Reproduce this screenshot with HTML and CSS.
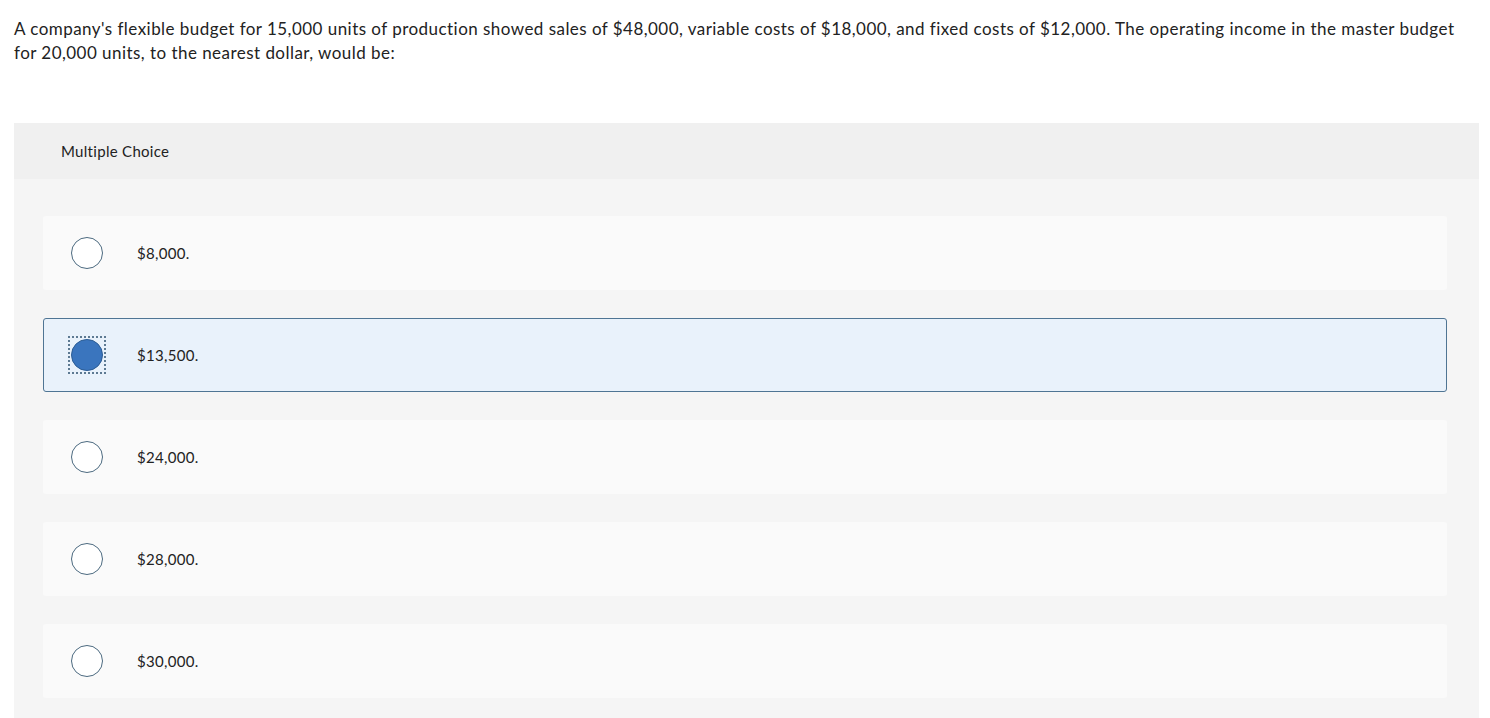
FILE: index.html
```html
<!DOCTYPE html>
<html lang="en">
<head>
<meta charset="utf-8">
<title>Multiple Choice</title>
<link rel="stylesheet" href="styles.css">
</head>
<body>
<div class="question">A company's flexible budget for 15,000 units of production showed sales of $48,000, variable costs of $18,000, and fixed costs of $12,000. The operating income in the master budget for 20,000 units, to the nearest dollar, would be:</div>
<div class="panel">
  <div class="panel-head">Multiple Choice</div>
  <div class="panel-body">
    <div class="option"><span class="radio-wrap"><span class="radio"></span></span><span class="label">$8,000.</span></div>
    <div class="option selected"><span class="radio-wrap focus"><span class="radio checked"></span></span><span class="label">$13,500.</span></div>
    <div class="option"><span class="radio-wrap"><span class="radio"></span></span><span class="label">$24,000.</span></div>
    <div class="option"><span class="radio-wrap"><span class="radio"></span></span><span class="label">$28,000.</span></div>
    <div class="option"><span class="radio-wrap"><span class="radio"></span></span><span class="label">$30,000.</span></div>
  </div>
</div>
</body>
</html>
```
FILE: styles.css
```css
html, body { margin: 0; padding: 0; background: #fff; }
body {
  font-family: "Lato", "Open Sans", "Liberation Sans", sans-serif;
  color: #222;
  padding: 17px 11px 0 14px;
}
.question {
  font-size: 17px;
  line-height: 24px;
  letter-spacing: 0.46px;
  color: #222;
}
.panel {
  margin-top: 58px;
  background: #f5f5f5;
}
.panel-head {
  background: #f0f0f0;
  height: 56px;
  display: flex;
  align-items: center;
  padding-left: 47px;
  font-size: 15px;
  letter-spacing: 0.3px;
  color: #222;
}
.panel-body {
  padding: 37px 32px 20px 29px;
  display: flex;
  flex-direction: column;
  gap: 28px;
}
.option {
  height: 74px;
  background: #fafafa;
  border: 1px solid transparent;
  border-radius: 3px;
  box-sizing: border-box;
  display: flex;
  align-items: center;
  padding-left: 24px;
}
.option.selected {
  background: #e9f2fb;
  border-color: #4f7594;
}
.radio-wrap {
  width: 38px;
  height: 38px;
  box-sizing: border-box;
  display: flex;
  align-items: center;
  justify-content: center;
  border: 2px solid transparent;
}
.radio-wrap.focus {
  border: 2px dotted #5d7a92;
}
.radio {
  width: 32px;
  height: 32px;
  box-sizing: border-box;
  border-radius: 50%;
  border: 1.5px solid #4c6a80;
  background: #fff;
}
.radio.checked {
  background: #3a75be;
  border: 1.5px solid #2c5d95;
}
.label {
  margin-left: 31px;
  font-size: 15px;
  letter-spacing: 0.3px;
  color: #222;
}
```
